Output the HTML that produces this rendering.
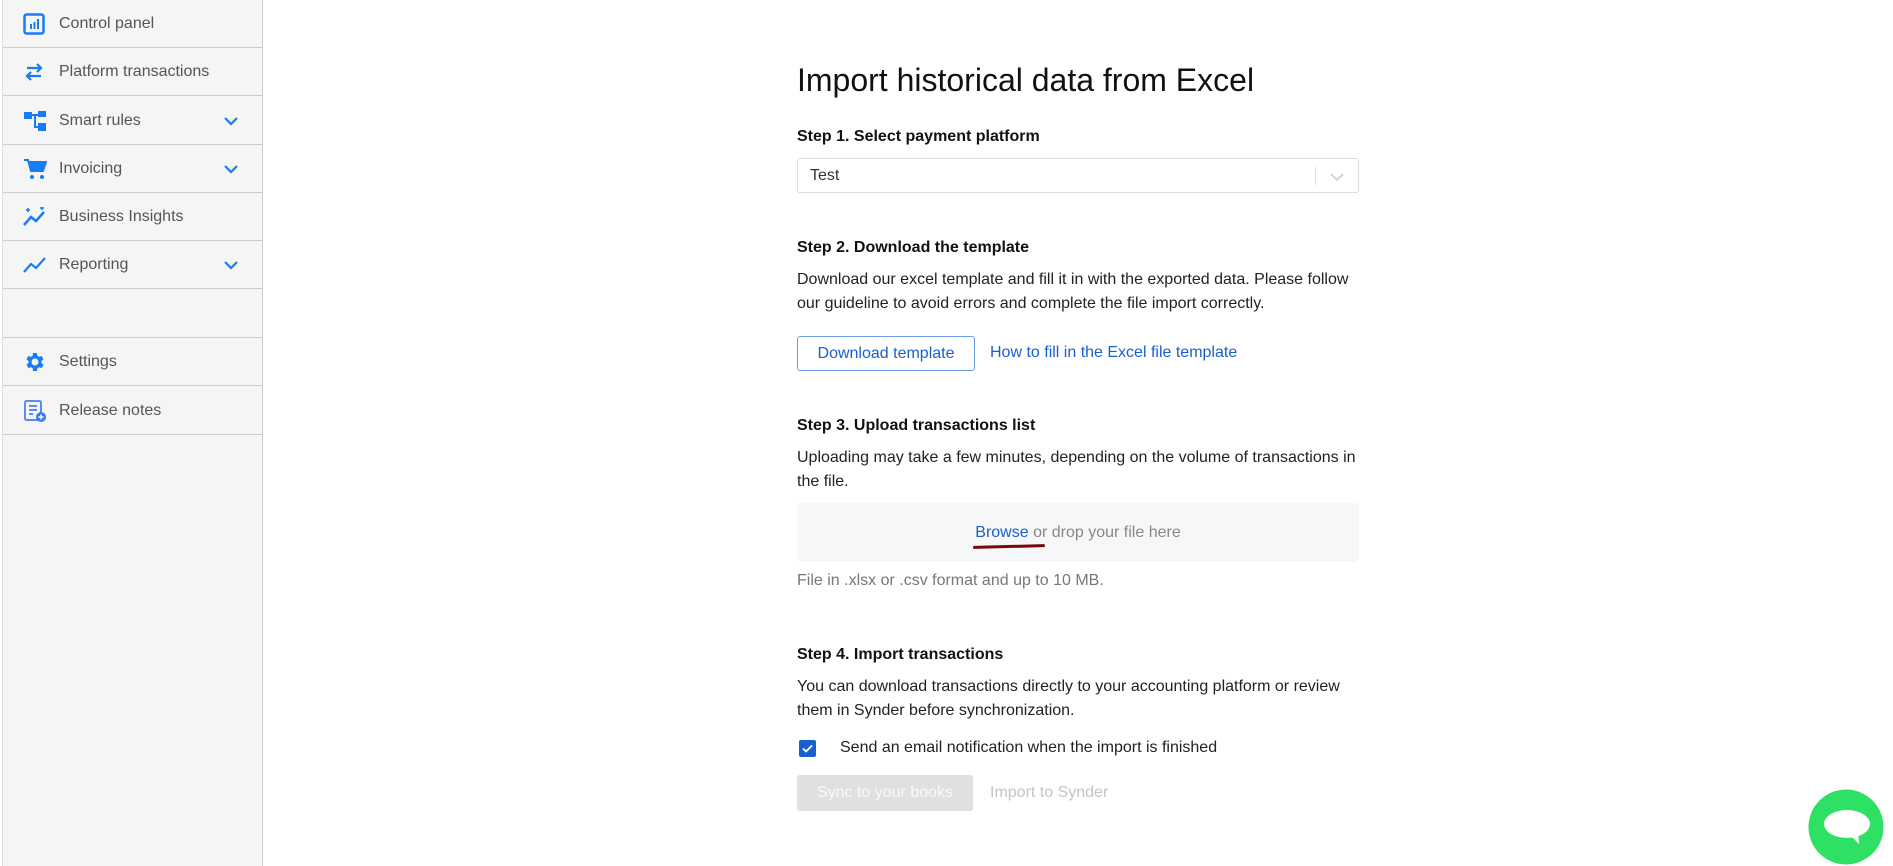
<!DOCTYPE html>
<html><head><meta charset="utf-8"><style>
*{box-sizing:border-box;margin:0;padding:0}
body{width:1893px;height:866px;background:#fff;font-family:"Liberation Sans",sans-serif;position:relative;overflow:hidden;color:#111}
.side{position:absolute;left:2px;top:0;width:261px;height:866px;background:#f5f5f5;border-right:1px solid #ccc;border-left:1px solid #ddd}
.it{position:absolute;left:0;width:260px;height:48px;border-bottom:1px solid #ccc;font-size:16px;color:#555}
.it span{position:absolute;left:56px;top:50%;transform:translateY(-50%)}
.it svg.ic{position:absolute;left:20px;top:50%;transform:translateY(-50%)}
.it svg.ch{position:absolute;left:221px;top:50%;transform:translateY(-50%)}
.a{position:absolute;left:797px}
h1{position:absolute;left:797px;top:62px;font-size:32px;font-weight:400;color:#111}
.lbl{font-size:16px;font-weight:bold;color:#111}
.p{font-size:16px;line-height:24px;color:#222;width:565px}
</style></head><body>
<div class="side">
 <div class="it" style="top:0"><svg class="ic" width="22" height="22" viewBox="0 0 22 22"><rect x="1.5" y="1.5" width="19" height="19" rx="2" fill="none" stroke="#1a7cf5" stroke-width="2.5"/><rect x="7" y="11" width="2" height="5" fill="#1a7cf5"/><rect x="10.5" y="9" width="2" height="7" fill="#1a7cf5"/><rect x="14" y="6" width="2" height="10" fill="#1a7cf5"/></svg><span>Control panel</span></div>
 <div class="it" style="top:48px"><svg class="ic" width="22" height="18" viewBox="0 0 22 18"><path d="M4 5h14M14 1l4 4-4 4M18 13H4M8 9l-4 4 4 4" fill="none" stroke="#1a7cf5" stroke-width="2.2"/></svg><span>Platform transactions</span></div>
 <div class="it" style="top:97px"><svg class="ic" width="24" height="22" viewBox="0 0 24 22"><rect x="1" y="2" width="8" height="7" fill="#1a7cf5"/><rect x="15" y="1" width="8" height="6" fill="#1a7cf5"/><rect x="15" y="13" width="8" height="8" fill="#1a7cf5"/><path d="M9 5h6M12 5v12h3" stroke="#1a7cf5" stroke-width="2" fill="none"/></svg><span>Smart rules</span><svg class="ch" width="14" height="10" viewBox="0 0 14 10"><path d="M1 2l6 6 6-6" fill="none" stroke="#1a7cf5" stroke-width="2.2"/></svg></div>
 <div class="it" style="top:145px"><svg class="ic" width="24" height="22" viewBox="0 0 24 22"><path d="M1 2h4l3 11h12l3-9H6" fill="#1a7cf5" stroke="#1a7cf5" stroke-width="2"/><circle cx="9" cy="19" r="2" fill="#1a7cf5"/><circle cx="19" cy="19" r="2" fill="#1a7cf5"/></svg><span>Invoicing</span><svg class="ch" width="14" height="10" viewBox="0 0 14 10"><path d="M1 2l6 6 6-6" fill="none" stroke="#1a7cf5" stroke-width="2.2"/></svg></div>
 <div class="it" style="top:193px"><svg class="ic" width="24" height="20" viewBox="0 0 24 20"><path d="M1 18l7-8 5 4 8-9" fill="none" stroke="#1a7cf5" stroke-width="2.5"/><path d="M3 3h4M5 1v4M17 1h4M19 -1v4" stroke="#1a7cf5" stroke-width="1.5"/></svg><span>Business Insights</span></div>
 <div class="it" style="top:241px"><svg class="ic" width="24" height="16" viewBox="0 0 24 16"><path d="M1 15l7-8 5 4 9-10" fill="none" stroke="#1a7cf5" stroke-width="2.2"/></svg><span>Reporting</span><svg class="ch" width="14" height="10" viewBox="0 0 14 10"><path d="M1 2l6 6 6-6" fill="none" stroke="#1a7cf5" stroke-width="2.2"/></svg></div>
 <div class="it" style="top:289px;height:49px"></div>
 <div class="it" style="top:338px"><svg class="ic" width="24" height="24" viewBox="0 0 24 24"><path fill="#1a7cf5" d="M19.4 13a7.5 7.5 0 000-2l2.1-1.6-2-3.5-2.5 1a7 7 0 00-1.7-1L15 3h-4l-.4 2.9a7 7 0 00-1.7 1l-2.5-1-2 3.5L6.6 11a7.5 7.5 0 000 2l-2.1 1.6 2 3.5 2.5-1a7 7 0 001.7 1L11 21h4l.4-2.9a7 7 0 001.7-1l2.5 1 2-3.5zM13 15.5a3.5 3.5 0 110-7 3.5 3.5 0 010 7z" transform="translate(-1 0)"/></svg><span>Settings</span></div>
 <div class="it" style="top:387px"><svg class="ic" width="24" height="24" viewBox="0 0 24 24"><rect x="2" y="2" width="16" height="19" rx="1.5" fill="none" stroke="#5b8def" stroke-width="2"/><path d="M6 7h8M6 11h8M6 15h4" stroke="#5b8def" stroke-width="2"/><circle cx="18" cy="18" r="5" fill="#3a7af0"/><path d="M18 15.5v5M15.5 18h5" stroke="#fff" stroke-width="1.5"/></svg><span>Release notes</span></div>
</div>

<h1>Import historical data from Excel</h1>
<div class="a lbl" style="top:128px">Step 1. Select payment platform</div>
<div class="a" style="top:158px;width:562px;height:35px;border:1px solid #d8dce3;border-radius:3px;font-size:16px;color:#333"><span style="position:absolute;left:12px;top:8px">Test</span><div style="position:absolute;right:42px;top:8px;width:1px;height:18px;background:#e0e0e0"></div><svg style="position:absolute;right:14px;top:13px" width="14" height="10" viewBox="0 0 14 10"><path d="M1 2l6 6 6-6" fill="none" stroke="#ccc" stroke-width="1.6"/></svg></div>
<div class="a lbl" style="top:239px">Step 2. Download the template</div>
<div class="a p" style="top:268px">Download our excel template and fill it in with the exported data. Please follow our guideline to avoid errors and complete the file import correctly.</div>
<div class="a" style="top:336px;width:178px;height:35px;border:1px solid #6f9ee8;border-radius:3px;font-size:16px;color:#1a5fd0;text-align:center;line-height:33px">Download template</div>
<div class="a" style="left:990px;top:344px;font-size:16px;color:#1a5fd0">How to fill in the Excel file template</div>
<div class="a lbl" style="top:417px">Step 3. Upload transactions list</div>
<div class="a p" style="top:446px">Uploading may take a few minutes, depending on the volume of transactions in the file.</div>
<div class="a" style="top:503px;width:562px;height:59px;background:#f6f7f9;border-radius:4px;text-align:center;line-height:59px;font-size:16px;color:#888"><span style="color:#1a5fd0">Browse</span> or drop your file here</div>
<div class="a" style="left:973px;top:545px;width:72px;height:3px;background:#7a0a0a;border-radius:2px;transform:rotate(-1.5deg)"></div>
<div class="a" style="top:572px;font-size:16px;color:#777">File in .xlsx or .csv format and up to 10 MB.</div>
<div class="a lbl" style="top:646px">Step 4. Import transactions</div>
<div class="a p" style="top:675px">You can download transactions directly to your accounting platform or review them in Synder before synchronization.</div>
<div class="a" style="left:799px;top:740px;width:17px;height:17px;background:#1a5fd0;border-radius:2px"><svg width="17" height="17" viewBox="0 0 17 17"><path d="M4 8.5l3 3 6-6" fill="none" stroke="#fff" stroke-width="1.8"/></svg></div>
<div class="a" style="left:840px;top:739px;font-size:16px;color:#222">Send an email notification when the import is finished</div>
<div class="a" style="top:775px;width:176px;height:36px;background:#e0e0e0;border-radius:3px;color:#fafafa;font-size:16px;text-align:center;line-height:36px">Sync to your books</div>
<div class="a" style="left:990px;top:784px;font-size:16px;color:#c4c4c4">Import to Synder</div>
<svg style="position:absolute;left:1808px;top:789px" width="76" height="76" viewBox="0 0 76 76"><circle cx="38" cy="38" r="37.5" fill="#2ee063"/><ellipse cx="39" cy="35" rx="23" ry="14" fill="#fff"/><path d="M40 44l11 11-1-13z" fill="#fff"/></svg>
</body></html>
